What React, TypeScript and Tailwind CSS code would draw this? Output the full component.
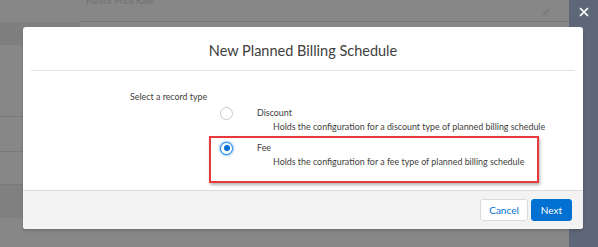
import { X } from "lucide-react";

const FONT = { fontFamily: 'Lato, "Open Sans", Arial, sans-serif' };

type Option = {
  id: string;
  label: string;
  description: string;
};

const OPTIONS: Option[] = [
  {
    id: "discount",
    label: "Discount",
    description: "Holds the configuration for a discount type of planned billing schedule",
  },
  {
    id: "fee",
    label: "Fee",
    description: "Holds the configuration for a fee type of planned billing schedule",
  },
];

function Radio({ checked }: { checked: boolean }) {
  if (checked) {
    return (
      <span className="flex h-[13px] w-[13px] items-center justify-center rounded-full border border-[#1589ee] bg-white shadow-[0_0_2px_1px_rgba(21,137,238,0.45)]">
        <span className="h-[6px] w-[6px] rounded-full bg-[#0070d2]" />
      </span>
    );
  }
  return <span className="block h-[13px] w-[13px] rounded-full border border-[#c9c9c9] bg-white" />;
}

export default function App() {
  const selected = "fee";

  return (
    <div className="relative flex h-[247px] w-[598px] overflow-hidden" style={FONT}>
      {/* page behind the backdrop */}
      <div className="flex flex-1 bg-[#878787]">
        <div className="flex w-[80px] flex-col">
          <div className="h-[22px]" />
          <div className="h-[23px] bg-[#7f7f7f]" />
          <div className="h-[72px] border-b border-[#7a7a7a]" />
          <div className="h-[35px] border-b border-[#7a7a7a]" />
          <div className="h-[33px] border-b border-[#7a7a7a]" />
          <div className="h-[33px] bg-[#808080]" />
        </div>
        <div className="flex flex-1 flex-col">
          <div className="flex h-[22px] items-start justify-between border-b border-[#777] pr-[22px]">
            <span className="pl-[6px] text-[9px] leading-[9px] text-[#6f6f6f] -mt-[4px]">
              Parent Price Rate
            </span>
            <span className="mt-[8px] h-[8px] w-[2px] rotate-45 bg-[#7a7a7a]" />
          </div>
        </div>
      </div>
      <div className="flex w-[29px] justify-center bg-[#5e6777] pt-[5px]">
        <X size={14} strokeWidth={3} className="text-white" />
      </div>

      {/* modal */}
      <div className="absolute left-[23px] top-[27px] flex h-[202px] w-[560px] flex-col rounded-[3px] bg-white shadow-[0_2px_3px_rgba(0,0,0,0.16)]">
        <div className="mx-[8px] flex h-[44px] shrink-0 items-center justify-center border-b border-[#e5e5e5]">
          <h2 className="pt-[4px] text-[14.5px] font-normal text-[#3e3e3c]">New Planned Billing Schedule</h2>
        </div>

        <div className="relative flex-1 whitespace-nowrap text-[8.9px] text-[#3e3e3c]">
          <div className="pl-[107px] pt-[19px] leading-[14px]">Select a record type</div>
          <div className="mt-[2px] flex flex-col gap-[8px] pl-[197px]">
            {OPTIONS.map((o) => (
              <div key={o.id} className="flex flex-col">
                <div className="flex h-[14px] items-center">
                  <Radio checked={o.id === selected} />
                  <span className="ml-[24px] leading-[14px]">{o.label}</span>
                </div>
                <div className="pl-[53px] leading-[13px]">{o.description}</div>
              </div>
            ))}
          </div>

          {/* highlight annotation */}
          <div className="absolute left-[186px] top-[65px] h-[47px] w-[330px] border-2 border-[#e8393e] shadow-[1px_2px_3px_rgba(0,0,0,0.3)]" />
        </div>

        <div className="flex h-[39px] shrink-0 items-center justify-end gap-[3px] rounded-b-[3px] border-t border-[#dddbda] bg-[#f3f3f3] pr-[11px]">
          <button
            type="button"
            className="h-[22px] w-[48px] rounded-[3px] border border-[#dddbda] bg-white text-[10px] text-[#0070d2]"
          >
            Cancel
          </button>
          <button
            type="button"
            className="h-[22px] w-[41px] rounded-[3px] border border-[#0070d2] bg-[#0070d2] text-[10px] text-white"
          >
            Next
          </button>
        </div>
      </div>
    </div>
  );
}
